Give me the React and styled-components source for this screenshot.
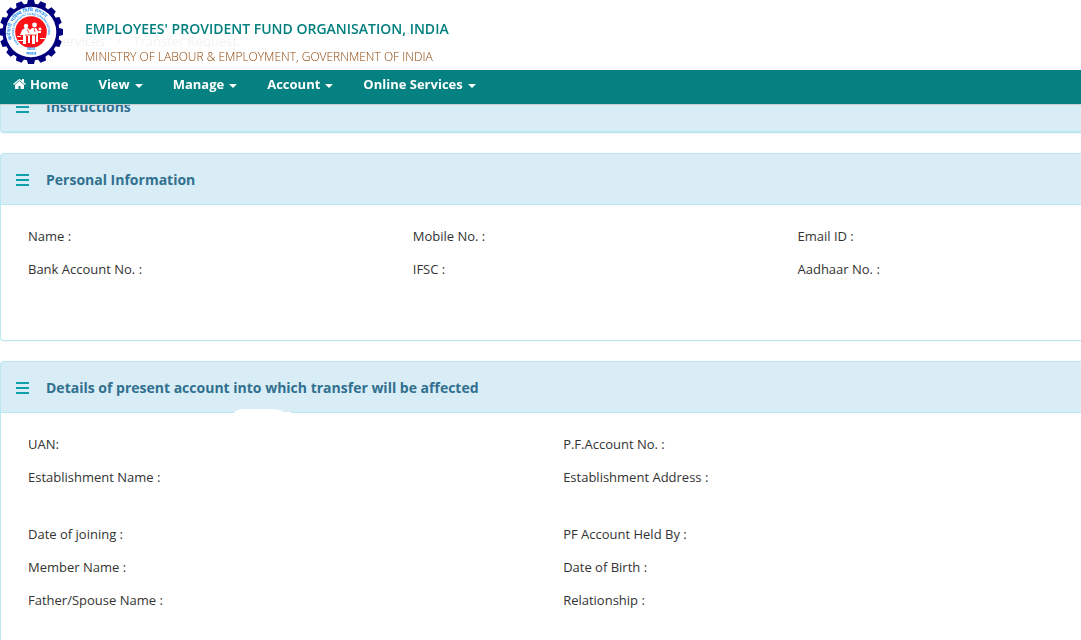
import React from 'react';
import styled, { createGlobalStyle } from 'styled-components';

const NAV_MENUS = ['View', 'Manage', 'Account', 'Online Services'];

const PERSONAL_FIELDS = [
  ['Name :', 'Mobile No. :', 'Email ID :'],
  ['Bank Account No. :', 'IFSC :', 'Aadhaar No. :'],
];

const ACCOUNT_FIELDS = [
  ['UAN:', 'P.F.Account No. :'],
  ['Establishment Name :', 'Establishment Address :'],
  ['Date of joining :', 'PF Account Held By :'],
  ['Member Name :', 'Date of Birth :'],
  ['Father/Spouse Name :', 'Relationship :'],
];

const TEETH = Array.from({ length: 16 }, (_, index) => index * 22.5);

const Emblem = () => (
  <EmblemSvg viewBox="0 0 64 65" role="img" aria-label="EPFO">
    <defs>
      <path id="outerArc" d="M13.4 42.2 A20.4 20.4 0 1 1 48.6 42.2" />
      <path id="innerArc" d="M19 44 A17 17 0 1 1 43 44" />
    </defs>
    <g fill="#00007f">
      {TEETH.map(angle => (
        <path
          key={angle}
          d="M26.5 6 L28 0 H34 L35.5 6 Z"
          transform={`rotate(${angle} 31 32)`}
        />
      ))}
      <circle cx="31" cy="32" r="28.5" />
    </g>
    <circle cx="31" cy="32" r="25.3" fill="#fff" />
    <circle cx="31" cy="32" r="15.8" fill="#fb1218" />
    <g fill="#fff">
      <circle cx="26" cy="26" r="2.2" />
      <circle cx="34.5" cy="25" r="2.4" />
      <circle cx="40" cy="29" r="1.5" />
      <path d="M22 30l3-2h3l2 2 2-2h4l2 3h3v2h-3v9h-2v-7h-1v9h-3v-9h-2v8h-2v-7h-2v8h-3v-9h-3z" />
      <path d="M17 36h4v1h-4zM18 40h5v1h-5zM40 38h5v1h-5z" />
    </g>
    <path d="M25 35h12M27 29l2 4M34 28l1 4" stroke="#fb1218" strokeWidth="0.8" fill="none" />
    <g fill="#2f93f5" fontWeight="bold">
      <text fontSize="5">
        <textPath href="#outerArc" startOffset="3">
          कर्मचारी भविष्य निधि संगठन
        </textPath>
      </text>
      <text fontSize="3">
        <textPath href="#innerArc">
          EMPLOYEES PROVIDENT FUND ORGANISATION
        </textPath>
      </text>
      <text x="31" y="50" fontSize="3" textAnchor="middle">INDIA</text>
      <text x="31" y="55" fontSize="5" textAnchor="middle">भारत</text>
    </g>
  </EmblemSvg>
);

const HomeIcon = () => (
  <svg width="13" height="14" viewBox="0 0 1664 1792" fill="currentColor" aria-hidden="true">
    <path d="M1408 992v480q0 26-19 45t-45 19H960v-384H704v384H320q-26 0-45-19t-19-45V992q0-1 .5-3t.5-3l575-474 575 474q1 2 1 6zm223-69l-62 74q-8 9-21 11h-3q-13 0-21-7L832 424l-692 577q-12 8-24 7-13-2-21-11l-62-74q-8-10-7-23.5t11-21.5l719-599q32-26 76-26t76 26l244 204V288q0-14 9-23t23-9h192q14 0 23 9t9 23v408l219 182q10 8 11 21.5t-7 23.5z" />
  </svg>
);

const Panel = ({ title, children }) => (
  <PanelBox>
    <PanelHeading>
      <Bars aria-hidden="true" viewBox="0 0 13 12">
        <path d="M0 1h13M0 6h13M0 11h13" stroke="#10a0ac" strokeWidth="2" />
      </Bars>
      <PanelTitle>{title}</PanelTitle>
    </PanelHeading>
    {children}
  </PanelBox>
);

const App = () => (
  <>
    <GlobalStyle />
    <Header>
      <Brand>
        <Emblem />
        <BrandText>
          <OrgName>EMPLOYEES' PROVIDENT FUND ORGANISATION, INDIA</OrgName>
          <Ministry>
            MINISTRY OF LABOUR &amp; EMPLOYMENT, GOVERNMENT OF INDIA
          </Ministry>
        </BrandText>
      </Brand>
      <Nav>
        <NavLink href="#home">
          <HomeIcon />
          Home
        </NavLink>
        {NAV_MENUS.map(menu => (
          <NavButton key={menu} type="button">
            {menu}
            <Caret />
          </NavButton>
        ))}
      </Nav>
    </Header>
    <Main>
      <Breadcrumb>
        <span>Online Services</span>
        <span>/</span>
        <span>Transfer Request</span>
      </Breadcrumb>
      <Panel title="Instructions" />
      <Panel title="Personal Information">
        <PersonalBody>
          {PERSONAL_FIELDS.flat().map(label => (
            <Field key={label}>{label}</Field>
          ))}
        </PersonalBody>
      </Panel>
      <Panel title="Details of present account into which transfer will be affected">
        <AccountBody>
          <Smudge />
          {ACCOUNT_FIELDS.map(([left, right]) => (
            <AccountRow key={left} $tall={left === 'Establishment Name :'}>
              <Field>{left}</Field>
              <Field>{right}</Field>
            </AccountRow>
          ))}
        </AccountBody>
      </Panel>
    </Main>
  </>
);

const GlobalStyle = createGlobalStyle`
  * {
    box-sizing: border-box;
  }

  body {
    margin: 0;
    overflow: hidden;
    background-color: #fff;
    color: #333;
    font-family: 'Segoe UI', 'Open Sans', 'Noto Sans', sans-serif;
    font-size: 13px;
    line-height: 20px;
  }
`;

const Header = styled.header`
  position: fixed;
  top: 0;
  left: 0;
  right: 0;
  z-index: 10;
`;

const Brand = styled.div`
  display: flex;
  gap: 21px;
  height: 70px;
  background-color: rgba(255, 255, 255, 0.92);
`;

const EmblemSvg = styled.svg`
  flex: none;
  width: 64px;
  height: 65px;
`;

const BrandText = styled.div`
  padding-top: 19px;
`;

const OrgName = styled.div`
  margin-bottom: 8px;
  color: #007f7e;
  font-size: 14px;
  font-weight: 600;
`;

const Ministry = styled.div`
  color: #8f4508;
  font-size: 12px;
  font-weight: 300;
`;

const Nav = styled.nav`
  display: flex;
  gap: 30px;
  height: 35px;
  padding: 4px 13px;
  border-bottom: 1px solid #c9cfd0;
  background-color: #048180;
`;

const NavLink = styled.a`
  display: flex;
  align-items: center;
  gap: 4px;
  height: 20px;
  color: #fff;
  font-size: 13px;
  font-weight: bold;
  text-decoration: none;
`;

const NavButton = styled.button`
  display: flex;
  align-items: center;
  gap: 5px;
  height: 20px;
  padding: 0;
  border: none;
  background: none;
  color: #fff;
  font-family: inherit;
  font-size: 13px;
  font-weight: bold;
  line-height: 20px;
`;

const Caret = styled.span`
  margin-top: 4px;
  border-top: 4px solid #fff;
  border-right: 4px solid transparent;
  border-left: 4px solid transparent;
`;

const Main = styled.main`
  padding-top: 31px;
`;

const Breadcrumb = styled.div`
  display: flex;
  gap: 12px;
  margin-bottom: 29px;
  padding-left: 12px;
  color: #555;
`;

const PanelBox = styled.section`
  margin-bottom: 20px;
  border: 1px solid #bce8f1;
  border-right: none;
  border-radius: 4px 0 0 4px;
  box-shadow: 0 1px 1px rgba(0, 0, 0, 0.05);
`;

const PanelHeading = styled.div`
  display: flex;
  align-items: center;
  gap: 17px;
  height: 51px;
  padding: 2px 15px 0;
  border-bottom: 1px solid #bce8f1;
  border-top-left-radius: 3px;
  background-color: #d9edf7;
`;

const Bars = styled.svg`
  width: 13px;
  height: 12px;
`;

const PanelTitle = styled.h3`
  margin: 0;
  color: #31708f;
  font-size: 14px;
  font-weight: bold;
`;

const PersonalBody = styled.div`
  display: grid;
  grid-template-columns: 19fr 19fr 14fr;
  row-gap: 13px;
  padding: 21px 0 61px 27px;
`;

const AccountBody = styled.div`
  position: relative;
  padding: 21px 0 20px 27px;
`;

/* blanked-out patch lying over the heading's lower edge */
const Smudge = styled.span`
  position: absolute;
  top: -4px;
  left: 233px;
  width: 50px;
  height: 8px;
  border-radius: 10px 14px 0 0 / 4px 4px 0 0;
  background-color: #fff;

  &::after {
    content: '';
    position: absolute;
    top: 3px;
    left: 44px;
    width: 14px;
    height: 3px;
    border-radius: 0 4px 0 0;
    background-color: #fff;
  }
`;

const AccountRow = styled.div`
  display: grid;
  grid-template-columns: 31fr 30fr;
  margin-bottom: ${({ $tall }) => ($tall ? 37 : 13)}px;
`;

const Field = styled.div`
  font-size: 13px;
`;

export default App;
